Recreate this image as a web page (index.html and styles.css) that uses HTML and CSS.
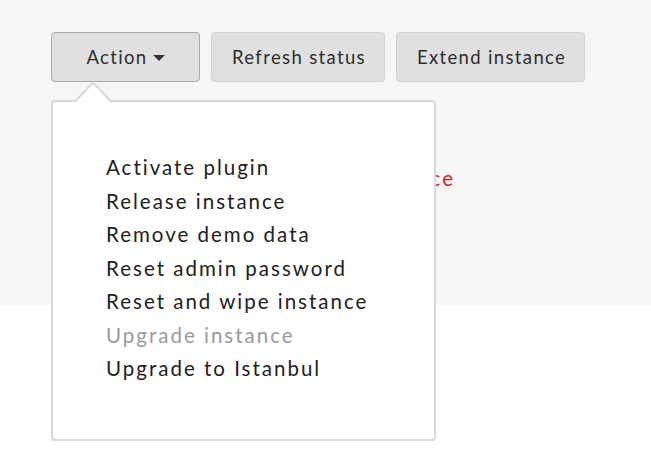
FILE: index.html
```html
<!DOCTYPE html>
<html>
<head>
<meta charset="utf-8">
<link rel="stylesheet" href="styles.css">
</head>
<body>
<div class="panel">
  <div class="toolbar">
    <div class="btn-group">
      <button class="btn btn-action">Action<span class="caret"></span></button>
      <div class="dropdown">
        <ul class="menu">
          <li>Activate plugin</li>
          <li>Release instance</li>
          <li>Remove demo data</li>
          <li>Reset admin password</li>
          <li>Reset and wipe instance</li>
          <li class="disabled">Upgrade instance</li>
          <li>Upgrade to Istanbul</li>
        </ul>
      </div>
    </div>
    <button class="btn">Refresh status</button>
    <button class="btn">Extend instance</button>
  </div>
  <p class="warning">Failed to upgrade the instance</p>
</div>
<div class="below"></div>
</body>
</html>
```
FILE: styles.css
```css
html, body {
  margin: 0;
  padding: 0;
  background: #ffffff;
  font-family: "Lato", "Open Sans", sans-serif;
  color: #222;
}
.panel {
  background: #f6f6f6;
  height: 305px;
  box-sizing: border-box;
  padding: 32px 51px 0;
}
.below {
  height: 161px;
  background: #ffffff;
}
.toolbar {
  display: flex;
  align-items: flex-start;
  gap: 11px;
}
.btn-group {
  position: relative;
}
.btn {
  display: flex;
  align-items: center;
  justify-content: center;
  height: 50px;
  box-sizing: border-box;
  background: #e0e0e0;
  border: 1px solid #d2d2d2;
  border-radius: 4px;
  font-family: "Lato", "Open Sans", sans-serif;
  font-size: 18.5px;
  letter-spacing: 1.35px;
  color: #2e2e2e;
  padding: 0 18px 0 20px;
  cursor: pointer;
}
.btn-action {
  width: 149px;
  border-color: #a8a8a8;
  padding: 0;
}
.caret {
  display: inline-block;
  width: 0;
  height: 0;
  border-left: 6px solid transparent;
  border-right: 6px solid transparent;
  border-top: 6px solid #333;
  margin-left: 5px;
  margin-top: 1px;
}
.dropdown {
  position: absolute;
  top: 68px;
  left: 0;
  width: 385px;
  height: 341px;
  box-sizing: border-box;
  background: #fff;
  border: 2px solid #d9d9d9;
  border-radius: 4px;
  z-index: 2;
}
.dropdown::before,
.dropdown::after {
  content: "";
  position: absolute;
  width: 0;
  height: 0;
  border-style: solid;
}
.dropdown::before {
  left: 21px;
  top: -21px;
  border-width: 0 19px 20px 19px;
  border-color: transparent transparent #d9d9d9 transparent;
}
.dropdown::after {
  left: 22px;
  top: -18px;
  border-width: 0 18px 19px 18px;
  border-color: transparent transparent #fff transparent;
}
.menu {
  list-style: none;
  margin: 0;
  padding: 49px 0 0 53px;
}
.menu li {
  font-size: 20.5px;
  line-height: 33.5px;
  letter-spacing: 2px;
  color: #222;
  white-space: nowrap;
}
.menu li.disabled {
  color: #9a9a9a;
}
.warning {
  width: 404px;
  margin: 81px 0 0;
  text-align: right;
  color: #c9252c;
  font-size: 20.5px;
  line-height: 30px;
  letter-spacing: 2px;
}
```
